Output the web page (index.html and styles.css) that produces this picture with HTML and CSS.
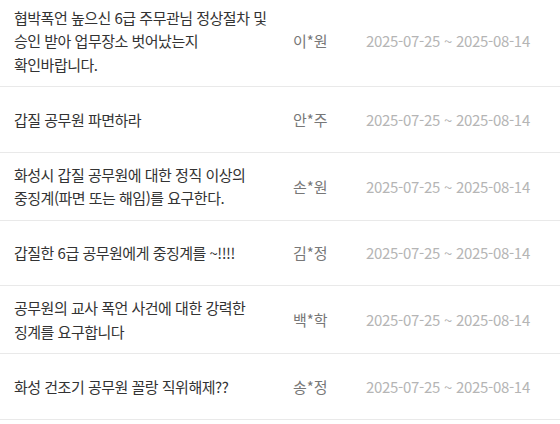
FILE: index.html
```html
<!DOCTYPE html>
<html lang="ko">
<head>
<meta charset="utf-8">
<link rel="stylesheet" href="styles.css">
</head>
<body>
<ul class="list">
  <li class="row">
    <div class="title">협박폭언 높으신 6급 주무관님 정상절차 및 승인 받아 업무장소 벗어났는지 확인바랍니다.</div>
    <div class="name">이*원</div>
    <div class="date">2025-07-25 ~ 2025-08-14</div>
  </li>
  <li class="row">
    <div class="title">갑질 공무원 파면하라</div>
    <div class="name">안*주</div>
    <div class="date">2025-07-25 ~ 2025-08-14</div>
  </li>
  <li class="row">
    <div class="title">화성시 갑질 공무원에 대한 정직 이상의 중징계(파면 또는 해임)를 요구한다.</div>
    <div class="name">손*원</div>
    <div class="date">2025-07-25 ~ 2025-08-14</div>
  </li>
  <li class="row">
    <div class="title">갑질한 6급 공무원에게 중징계를 ~!!!!</div>
    <div class="name">김*정</div>
    <div class="date">2025-07-25 ~ 2025-08-14</div>
  </li>
  <li class="row">
    <div class="title">공무원의 교사 폭언 사건에 대한 강력한 징계를 요구합니다</div>
    <div class="name">백*학</div>
    <div class="date">2025-07-25 ~ 2025-08-14</div>
  </li>
  <li class="row">
    <div class="title">화성 건조기 공무원 꼴랑 직위해제??</div>
    <div class="name">송*정</div>
    <div class="date">2025-07-25 ~ 2025-08-14</div>
  </li>
</ul>
</body>
</html>
```
FILE: styles.css
```css
html, body {
  margin: 0;
  padding: 0;
  background: #fff;
}
body {
  font-family: "Noto Sans CJK KR", "Noto Sans", sans-serif;
  overflow: hidden;
}
.list {
  list-style: none;
  margin: -4.5px 0 0;
  padding: 0;
}
.row {
  display: flex;
  align-items: center;
  min-height: 65.5px;
  padding: 10px 0;
  box-sizing: border-box;
  border-bottom: 1px solid #e9e9e9;
}
.title {
  width: 265px;
  padding-left: 14px;
  box-sizing: content-box;
  font-size: 15px;
  line-height: 23.5px;
  color: #333;
  letter-spacing: -0.5px;
  word-break: keep-all;
}
.name {
  margin-left: 14px;
  width: 73px;
  font-size: 15px;
  color: #777;
}
.date {
  font-size: 15px;
  letter-spacing: -0.3px;
  color: #b5b5b5;
}
```
